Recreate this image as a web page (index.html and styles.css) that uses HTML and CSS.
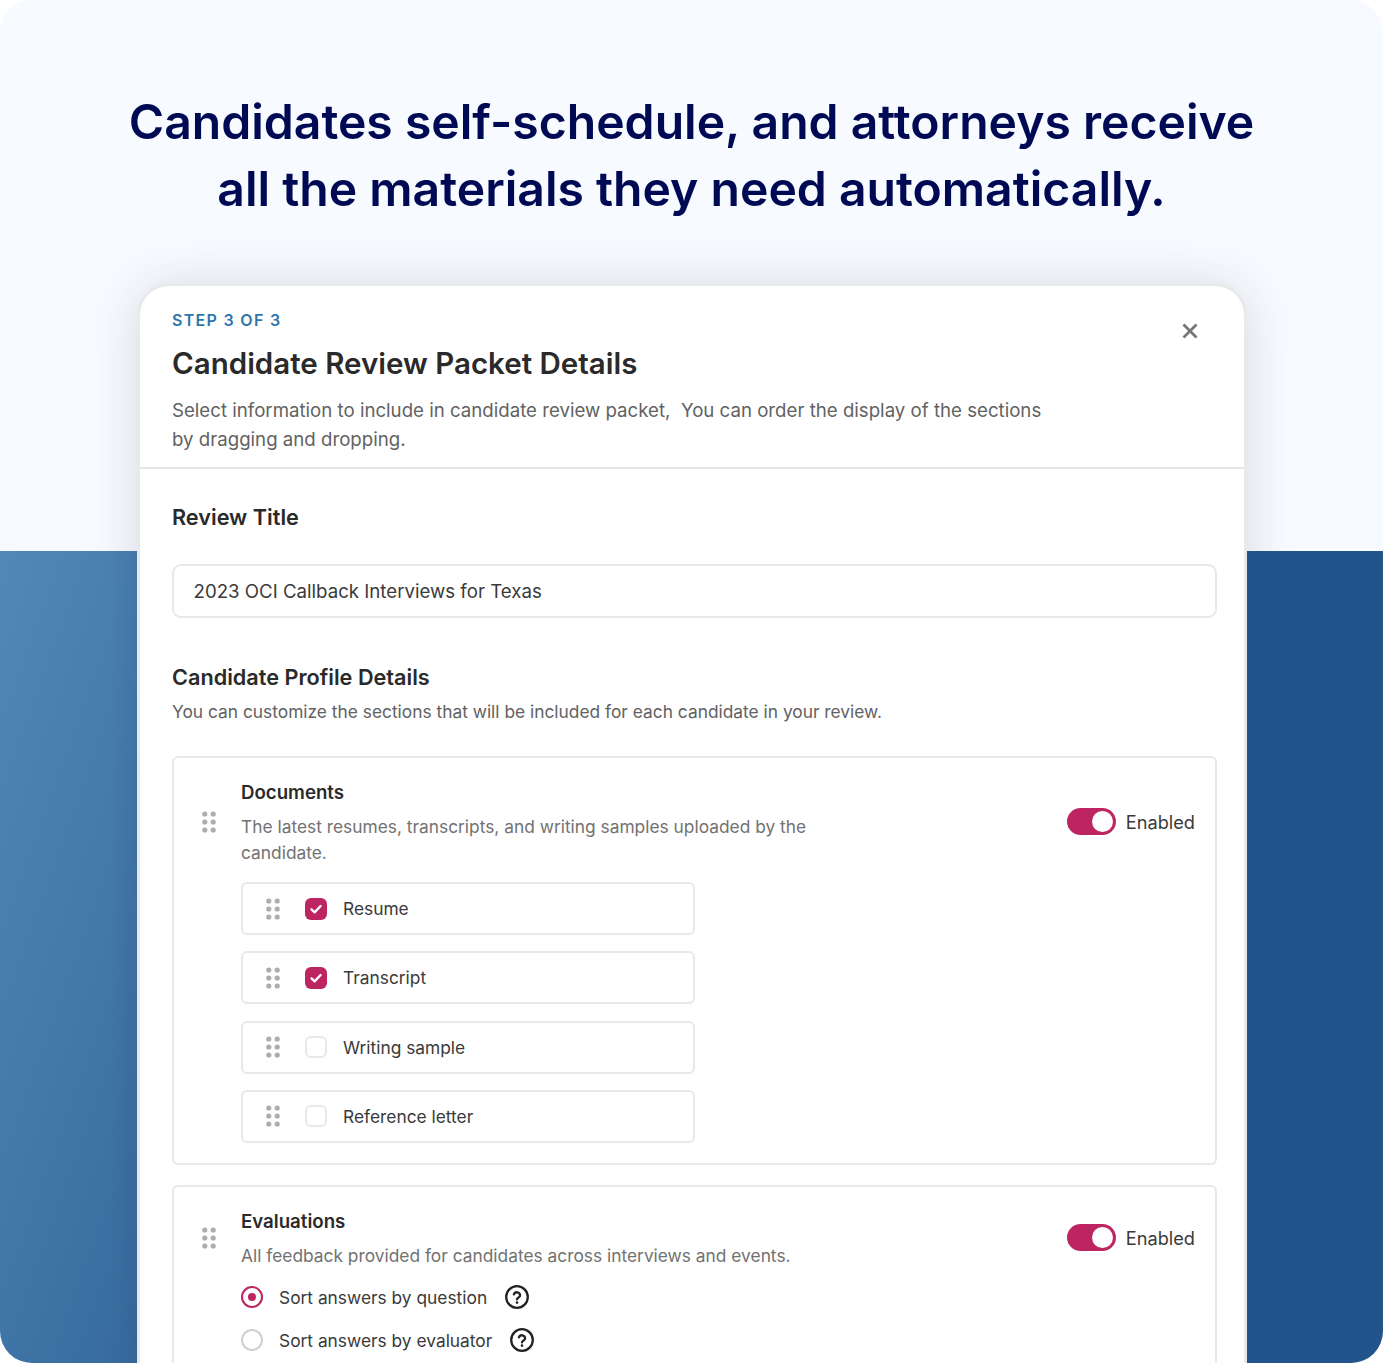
FILE: index.html
```html
<!DOCTYPE HTML>
<html>
<head>
    <meta charset='utf-8'>
    <title>Candidate Review Packet Details</title>
    <link rel="stylesheet" href="styles.css">
</head>
<body>
    <svg width="0" height="0" class="noDisplay">
        <symbol id="grip" viewBox="0 0 14 22">
            <circle cx="2.8" cy="3" r="2.6"/><circle cx="11.2" cy="3" r="2.6"/>
            <circle cx="2.8" cy="11" r="2.6"/><circle cx="11.2" cy="11" r="2.6"/>
            <circle cx="2.8" cy="19" r="2.6"/><circle cx="11.2" cy="19" r="2.6"/>
        </symbol>
        <symbol id="help" viewBox="0 0 24 24">
            <circle cx="12" cy="12" r="10.8" fill="none" stroke="#222" stroke-width="2.3"/>
            <path d="M8.9 9.4a3.2 3.2 0 0 1 6.2 .8c0 2.1-3.1 2.6-3.1 4.2" fill="none" stroke="#222" stroke-width="2.3" stroke-linecap="round"/>
            <circle cx="12" cy="17.6" r="1.3" fill="#222"/>
        </symbol>
        <symbol id="tick" viewBox="0 0 22 22">
            <path d="M6.5 11.4l3.1 3 6-6.4" fill="none" stroke="#fff" stroke-width="2.3" stroke-linecap="round" stroke-linejoin="round"/>
        </symbol>
    </svg>

    <div class="frame">
        <div class="band"></div>
        <div class="cardShadow"></div>

        <h1 class="headline">Candidates self-schedule, and attorneys receive<br>all the materials they need automatically.</h1>

        <div class="card">
            <div class="cardHeader">
                <div class="stepLabel">STEP 3 OF 3</div>
                <h2 class="cardTitle">Candidate Review Packet Details</h2>
                <p class="cardDesc">Select information to include in candidate review packet,&nbsp; You can order the display of the sections<br>by dragging and dropping.</p>
                <svg class="closeIcon" viewBox="0 0 16 16"><path d="M1.5 1.5l13 13M14.5 1.5l-13 13"/></svg>
            </div>

            <div class="cardBody">
                <h3 class="fieldTitle">Review Title</h3>
                <div class="textInput">2023 OCI Callback Interviews for Texas</div>

                <h3 class="fieldTitle profileTitle">Candidate Profile Details</h3>
                <p class="profileDesc">You can customize the sections that will be included for each candidate in your review.</p>

                <div class="section">
                    <svg class="grip sectionGrip"><use href="#grip"/></svg>
                    <div class="sectionMain">
                        <div class="sectionTitle">Documents</div>
                        <p class="sectionDesc">The latest resumes, transcripts, and writing samples uploaded by the candidate.</p>
                        <div class="docList">
                            <div class="docRow">
                                <svg class="grip"><use href="#grip"/></svg>
                                <span class="checkbox checked"><svg><use href="#tick"/></svg></span>
                                <span>Resume</span>
                            </div>
                            <div class="docRow">
                                <svg class="grip"><use href="#grip"/></svg>
                                <span class="checkbox checked"><svg><use href="#tick"/></svg></span>
                                <span>Transcript</span>
                            </div>
                            <div class="docRow">
                                <svg class="grip"><use href="#grip"/></svg>
                                <span class="checkbox"></span>
                                <span>Writing sample</span>
                            </div>
                            <div class="docRow">
                                <svg class="grip"><use href="#grip"/></svg>
                                <span class="checkbox"></span>
                                <span>Reference letter</span>
                            </div>
                        </div>
                    </div>
                    <div class="toggleWrap">
                        <span class="toggle"></span>
                        <span class="toggleLabel">Enabled</span>
                    </div>
                </div>

                <div class="section">
                    <svg class="grip sectionGrip evalGrip"><use href="#grip"/></svg>
                    <div class="sectionMain">
                        <div class="sectionTitle">Evaluations</div>
                        <p class="sectionDesc">All feedback provided for candidates across interviews and events.</p>
                        <div class="radioList">
                            <div class="radioRow">
                                <span class="radio selected"></span>
                                <span>Sort answers by question</span>
                                <svg class="helpIcon"><use href="#help"/></svg>
                            </div>
                            <div class="radioRow">
                                <span class="radio"></span>
                                <span>Sort answers by evaluator</span>
                                <svg class="helpIcon"><use href="#help"/></svg>
                            </div>
                        </div>
                    </div>
                    <div class="toggleWrap evalToggle">
                        <span class="toggle"></span>
                        <span class="toggleLabel">Enabled</span>
                    </div>
                </div>
            </div>
        </div>
    </div>
</body>
</html>
```

FILE: styles.css
```css
html, body {
    margin: 0;
    padding: 0;
    background: #fff;
}

body {
    width: 1383px;
    height: 1363px;
    overflow: hidden;
    font-family: "Inter", "Liberation Sans", sans-serif;
    color: #2b2b2b;
}

.noDisplay {
    position: absolute;
}

.frame {
    position: relative;
    height: 1363px;
    overflow: hidden;
    border-radius: 32px;
    background: #f7fafe;
}

.band {
    position: absolute;
    left: 0;
    right: 0;
    top: 551px;
    bottom: 0;
    z-index: 1;
    background:
        linear-gradient(90deg, rgba(30, 50, 80, 0) 110px, rgba(30, 50, 80, 0.1) 137px, rgba(30, 50, 80, 0) 137px),
        linear-gradient(110deg, #5088b8 0%, #22538a 47%, #22538a 100%);
}

.cardShadow {
    position: absolute;
    left: 139px;
    top: 287px;
    width: 1106px;
    height: 400px;
    border-radius: 30px;
    box-shadow: 0 0 50px rgba(40, 50, 70, 0.16);
}

.headline {
    position: relative;
    margin: 0;
    padding-top: 88px;
    height: 195px;
    font-size: 48.1px;
    line-height: 67px;
    font-weight: 600;
    text-align: center;
    color: #000a54;
}

.card {
    position: relative;
    z-index: 2;
    width: 1104px;
    margin-left: 137px;
    height: 1200px;
    background: #fff;
    border: 3px solid #e8e9ea;
    border-bottom: 0;
    border-radius: 32px 32px 0 0;
}

.cardHeader {
    position: relative;
    height: 183px;
    padding: 22px 32px 0;
    box-sizing: border-box;
    border-bottom: 2px solid #e6e6e6;
}

.stepLabel {
    font-size: 16px;
    line-height: 24px;
    font-weight: 600;
    letter-spacing: 1.3px;
    color: #2e75ad;
}

.cardTitle {
    margin: 11px 0 0;
    font-size: 29.5px;
    line-height: 40px;
    font-weight: 600;
    color: #2a2a2a;
}

.cardDesc {
    margin: 13px 0 0;
    font-size: 18.67px;
    line-height: 29px;
    color: #626262;
}

.closeIcon {
    position: absolute;
    top: 37px;
    right: 46px;
    width: 16px;
    height: 16px;
    fill: none;
    stroke: #767676;
    stroke-width: 2.8;
}

.cardBody {
    padding: 34px 27px 0 32px;
}

.fieldTitle {
    margin: 0;
    font-size: 21.67px;
    line-height: 28px;
    font-weight: 600;
    color: #2a2a2a;
}

.textInput {
    margin-top: 33px;
    height: 54px;
    box-sizing: border-box;
    padding: 0 0 0 19.5px;
    display: flex;
    align-items: center;
    border: 2px solid #e8e8e8;
    border-radius: 9px;
    font-size: 18.67px;
    color: #3a3a3a;
}

.profileTitle {
    margin-top: 45px;
}

.profileDesc {
    margin: 8px 0 0;
    font-size: 17.35px;
    line-height: 26px;
    color: #626262;
}

.section {
    display: flex;
    margin-top: 31px;
    padding: 21px 20px 20px 0;
    border: 2px solid #e8e8e8;
    border-radius: 6px;
}

.section + .section {
    margin-top: 20px;
}

.grip {
    width: 14px;
    height: 22px;
    flex: none;
    fill: #adadad;
}

.sectionGrip {
    margin: 32px 25px 0 28px;
}

.evalGrip {
    margin-top: 19px;
}

.sectionMain {
    flex: 1;
    min-width: 0;
}

.sectionTitle {
    font-size: 18.67px;
    line-height: 28px;
    font-weight: 600;
    color: #2a2a2a;
}

.sectionDesc {
    width: 600px;
    margin: 7px 0 0;
    font-size: 17.35px;
    line-height: 26px;
    color: #727272;
}

.docList {
    width: 454px;
    margin-top: 16px;
    display: flex;
    flex-direction: column;
    gap: 16.3px;
}

.docRow {
    height: 53px;
    box-sizing: border-box;
    display: flex;
    align-items: center;
    border: 2px solid #e8e8e8;
    border-radius: 6px;
    font-size: 17.35px;
    color: #3a3a3a;
}

.docRow .grip {
    margin: 0 25px 0 23px;
}

.checkbox {
    width: 22px;
    height: 22px;
    flex: none;
    box-sizing: border-box;
    margin-right: 16px;
    border: 2px solid #e8e8e8;
    border-radius: 6px;
    background: #fff;
}

.checkbox.checked {
    border: 0;
    background: #bd2562;
}

.checkbox svg {
    display: block;
    width: 22px;
    height: 22px;
}

.toggleWrap {
    display: flex;
    align-items: center;
    align-self: flex-start;
    gap: 10px;
    margin-top: 28px;
    font-size: 18.2px;
    line-height: 27px;
    color: #3a3a3a;
}

.toggleLabel {
    padding-top: 2px;
}

.evalToggle {
    margin-top: 15px;
}

.toggle {
    position: relative;
    width: 49px;
    height: 27px;
    border-radius: 14px;
    background: #bd2562;
}

.toggle::after {
    content: "";
    position: absolute;
    top: 3px;
    right: 3px;
    width: 21px;
    height: 21px;
    border-radius: 50%;
    background: #fff;
}

.radioList {
    margin-top: 7px;
}

.radioRow {
    height: 43px;
    display: flex;
    align-items: center;
    font-size: 17.35px;
    color: #3a3a3a;
}

.radio {
    position: relative;
    width: 22px;
    height: 22px;
    flex: none;
    box-sizing: border-box;
    margin-right: 16px;
    border: 2px solid #cfcfcf;
    border-radius: 50%;
}

.radio.selected {
    border-color: #bd2562;
}

.radio.selected::after {
    content: "";
    position: absolute;
    top: 5px;
    left: 5px;
    width: 8px;
    height: 8px;
    border-radius: 50%;
    background: #bd2562;
}

.helpIcon {
    width: 24px;
    height: 24px;
    margin-left: 18px;
}
```
